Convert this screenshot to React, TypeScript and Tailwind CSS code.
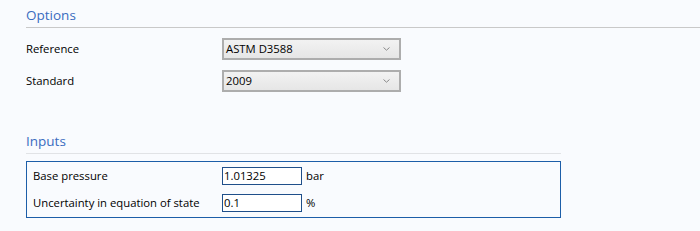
import React from 'react';

const font = { fontFamily: '"Segoe UI", "Open Sans", "Noto Sans", sans-serif' };

const Chevron = () => (
  <svg width="7" height="4" viewBox="0 0 7 4" className="shrink-0">
    <path d="M0.5 0.5 L3.5 3.2 L6.5 0.5" fill="none" stroke="#8a8a8a" strokeWidth="1" />
  </svg>
);

const Combo = ({ value }: { value: string }) => (
  <div className="w-[179px] h-[22px] border-2 border-[#adadad] bg-gradient-to-b from-[#f2f2f2] to-[#e6e6e6] flex items-center justify-between pl-[2px] pr-[9px] text-black">
    <span>{value}</span>
    <Chevron />
  </div>
);

const Section = ({ title, full }: { title: string; full?: boolean }) => (
  <div className={`${full ? 'w-[674px] border-[#c9c9c9]' : 'w-[535px] border-[#e1e3e6]'} border-b`}>
    <div className="text-[13.5px] leading-[20px] text-[#3a6cc0] pb-[2px]">{title}</div>
  </div>
);

export default function App() {
  return (
    <div className="w-[700px] h-[231px] bg-[#f9fbfe] pl-[26px] pt-[5px] text-[11.3px] text-black" style={font}>
      <Section title="Options" full />

      <div className="flex flex-col gap-[10px] mt-[10px]">
        <div className="flex items-center">
          <div className="w-[196px]">Reference</div>
          <Combo value="ASTM D3588" />
        </div>
        <div className="flex items-center">
          <div className="w-[196px]">Standard</div>
          <Combo value="2009" />
        </div>
      </div>

      <div className="mt-[39px]">
        <Section title="Inputs" />
      </div>

      <div className="mt-[7px] w-[535px] h-[57px] border-[1.5px] border-[#1d5ea8] flex flex-col justify-center gap-[9px] pl-[6px]">
        <div className="flex items-center">
          <div className="w-[189px]">Base pressure</div>
          <div className="w-[80px] h-[18px] border border-[#1f4f8a] bg-white flex items-center pl-[1px] leading-none">1.01325</div>
          <span className="ml-[4px]">bar</span>
        </div>
        <div className="flex items-center">
          <div className="w-[189px]">Uncertainty in equation of state</div>
          <div className="w-[80px] h-[18px] border border-[#1f4f8a] bg-white flex items-center pl-[1px] leading-none">0.1</div>
          <span className="ml-[4px]">%</span>
        </div>
      </div>
    </div>
  );
}
